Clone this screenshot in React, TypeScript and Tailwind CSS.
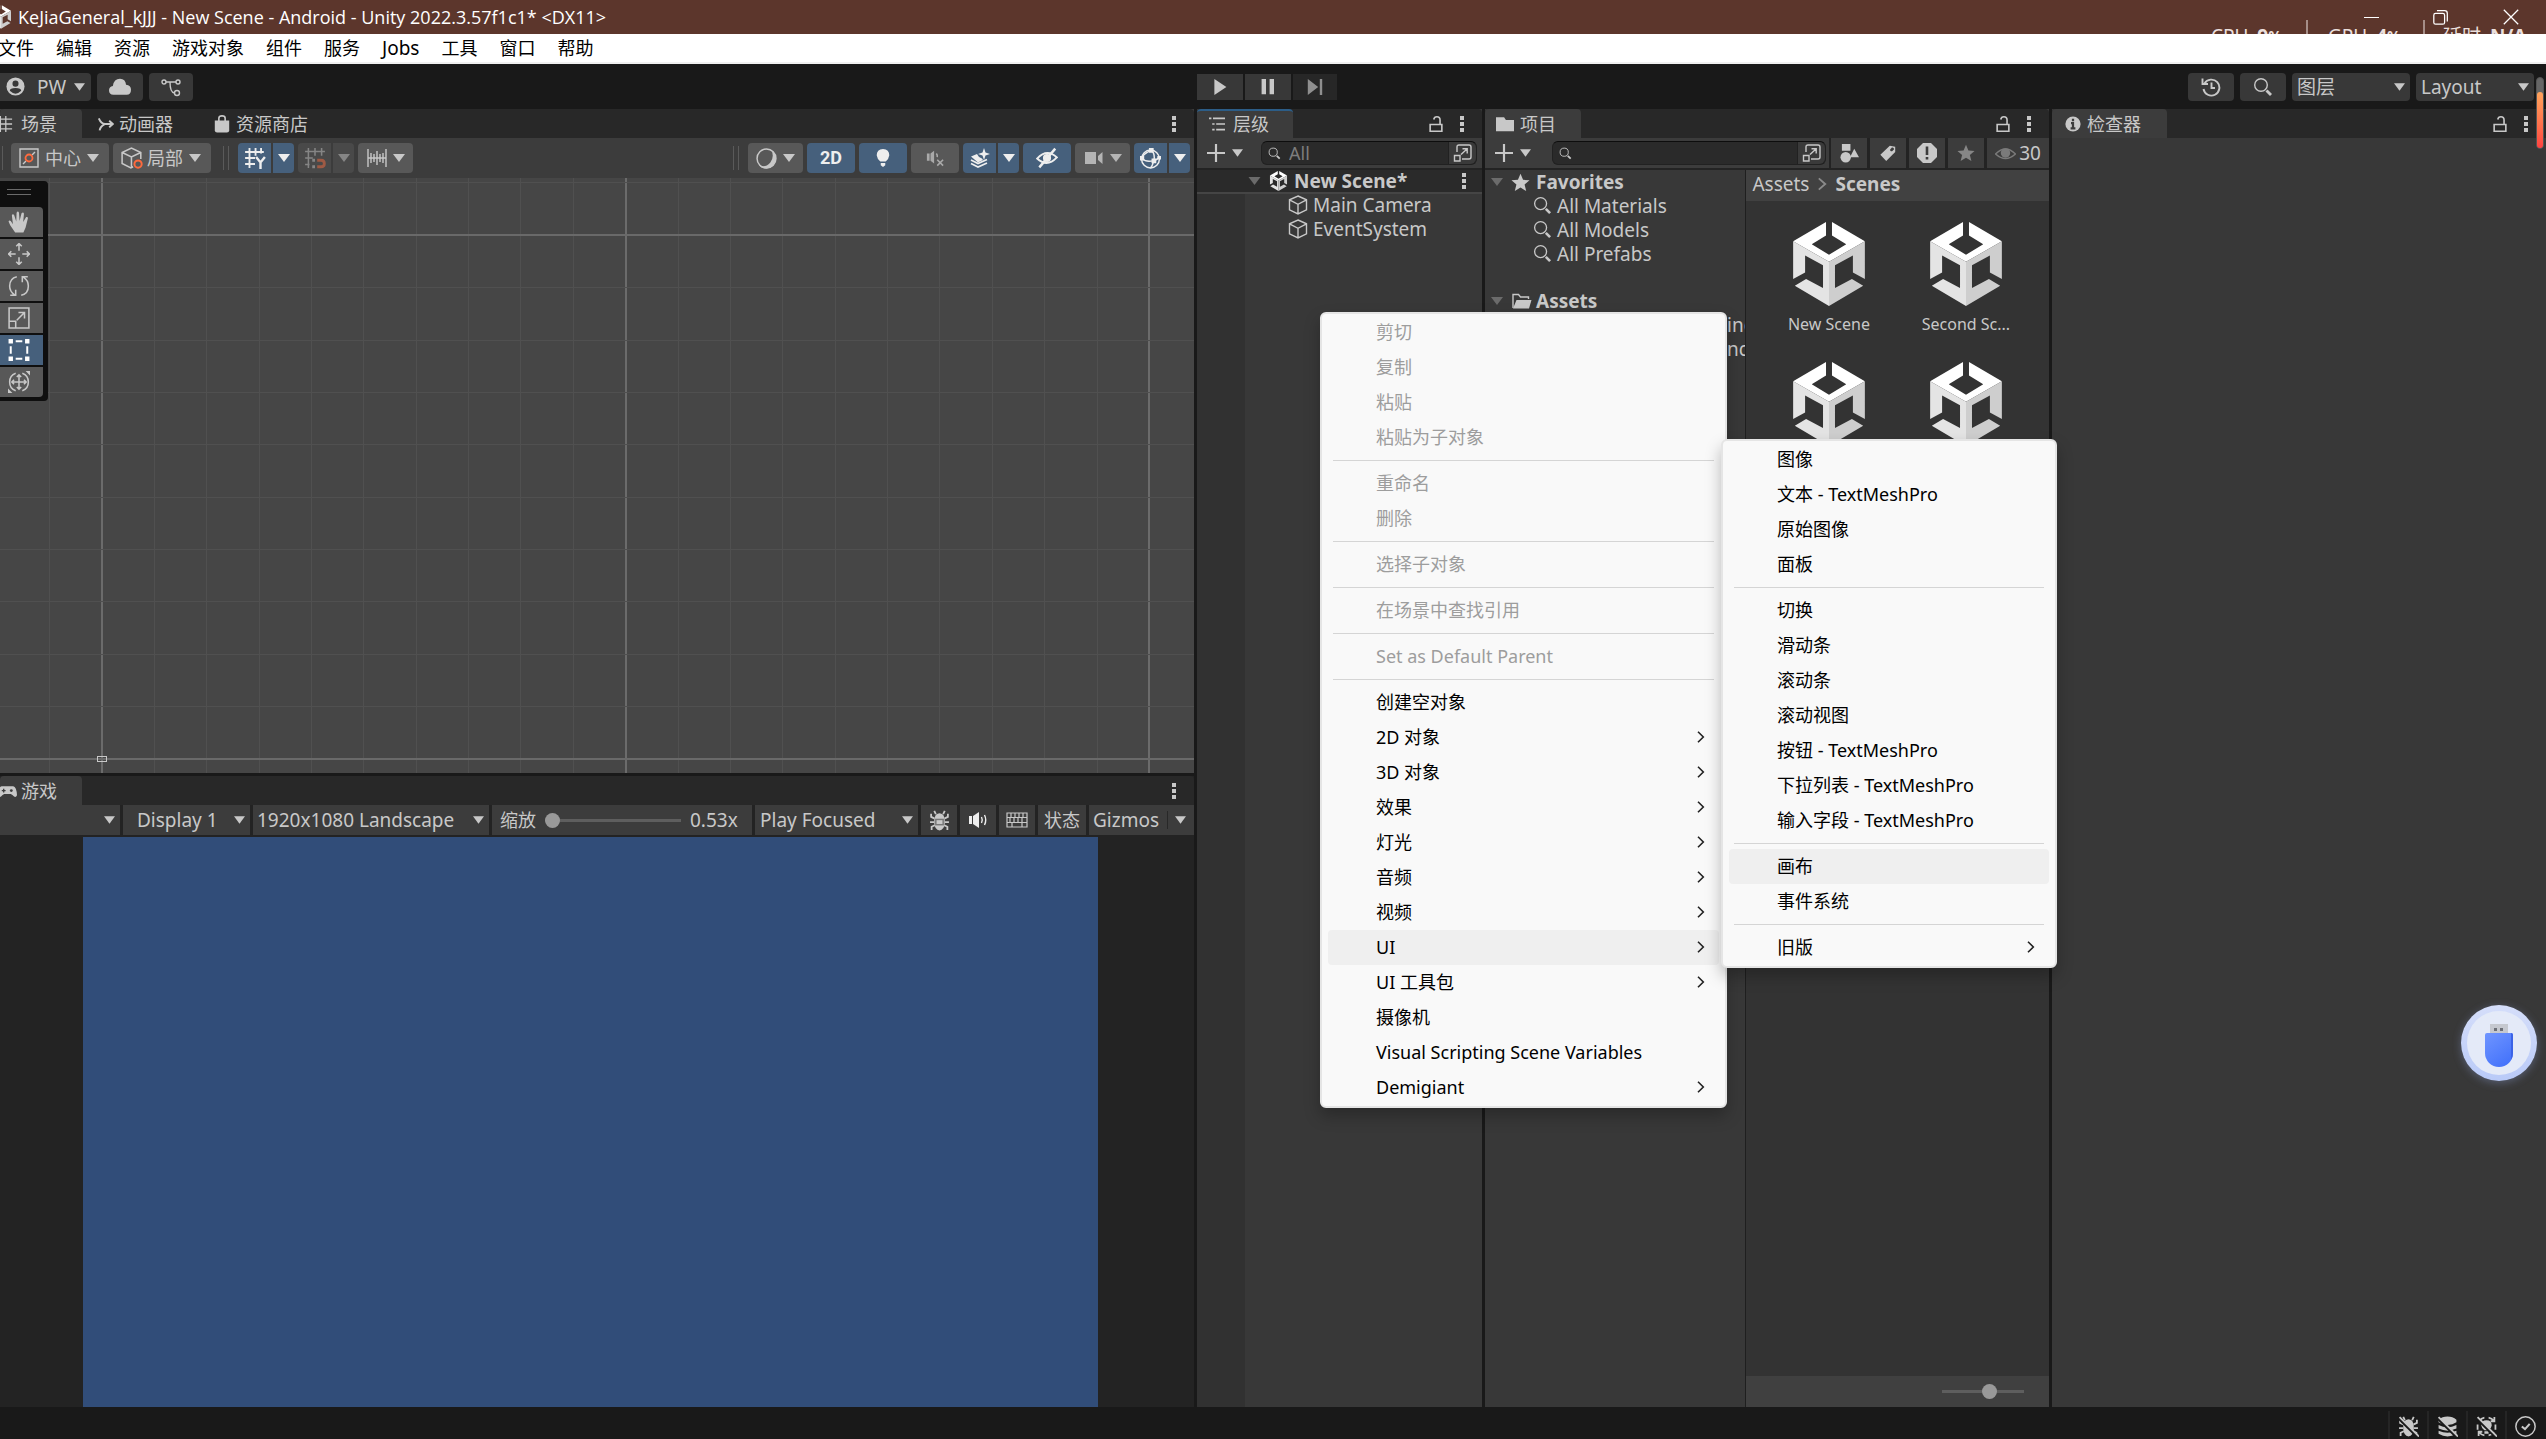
import { useState } from 'react'
import type { ReactNode } from 'react'
import clsx from 'clsx'

type MenuEntry = { label: string; disabled?: boolean; sub?: boolean; active?: boolean } | '-'

const menuBar = ['文件', '编辑', '资源', '游戏对象', '组件', '服务', 'Jobs', '工具', '窗口', '帮助']

const contextMenu: MenuEntry[] = [
  { label: '剪切', disabled: true },
  { label: '复制', disabled: true },
  { label: '粘贴', disabled: true },
  { label: '粘贴为子对象', disabled: true },
  '-',
  { label: '重命名', disabled: true },
  { label: '删除', disabled: true },
  '-',
  { label: '选择子对象', disabled: true },
  '-',
  { label: '在场景中查找引用', disabled: true },
  '-',
  { label: 'Set as Default Parent', disabled: true },
  '-',
  { label: '创建空对象' },
  { label: '2D 对象', sub: true },
  { label: '3D 对象', sub: true },
  { label: '效果', sub: true },
  { label: '灯光', sub: true },
  { label: '音频', sub: true },
  { label: '视频', sub: true },
  { label: 'UI', sub: true, active: true },
  { label: 'UI 工具包', sub: true },
  { label: '摄像机' },
  { label: 'Visual Scripting Scene Variables' },
  { label: 'Demigiant', sub: true },
]

const uiMenu: MenuEntry[] = [
  { label: '图像' },
  { label: '文本 - TextMeshPro' },
  { label: '原始图像' },
  { label: '面板' },
  '-',
  { label: '切换' },
  { label: '滑动条' },
  { label: '滚动条' },
  { label: '滚动视图' },
  { label: '按钮 - TextMeshPro' },
  { label: '下拉列表 - TextMeshPro' },
  { label: '输入字段 - TextMeshPro' },
  '-',
  { label: '画布', active: true },
  { label: '事件系统' },
  '-',
  { label: '旧版', sub: true },
]

/* ---------- Icons ---------- */

function Icon({ className = 'size-5', children }: { className?: string; children: ReactNode }) {
  return (
    <svg
      viewBox="0 0 20 20"
      className={clsx('shrink-0', className)}
      fill="none"
      stroke="currentColor"
      strokeWidth="1.4"
      aria-hidden="true"
    >
      {children}
    </svg>
  )
}

function Caret({ className = 'w-3' }: { className?: string }) {
  return (
    <svg viewBox="0 0 12 8" className={clsx('h-2 shrink-0 fill-current', className)} aria-hidden="true">
      <path d="M0 0H12L6 8Z" />
    </svg>
  )
}

function UnityCube({ className }: { className: string }) {
  return (
    <svg viewBox="0 0 216 253" className={clsx('shrink-0', className)} aria-hidden="true">
      <path fill="#fff" d="M99 0V41L56 67L108 99L160 67L117 41V0L216 58L108 120L0 58Z" />
      <path fill="#e4e4e4" d="M0 58L108 120V253L5 192L39 172L90 199V130L36 101V152L0 172Z" />
      <path fill="#cecece" d="M216 58L108 120V253L211 192L177 172L126 199V130L180 101V152L216 172Z" />
    </svg>
  )
}

const Cube = () => (
  <Icon>
    <path d="M10 1L18.5 4.8V14.8L10 19L1.5 14.8V4.8ZM1.5 4.8L10 9.3L18.5 4.8M10 9.3V19" />
  </Icon>
)

const Magnifier = ({ className }: { className?: string }) => (
  <Icon className={className}>
    <circle cx="8" cy="8" r="6.3" />
    <path d="M13.5 13.5L18 18" strokeWidth="2.8" />
  </Icon>
)

const ExportIcon = () => (
  <Icon className="size-5">
    <path d="M4 9V4Q4 2 6 2H16Q18 2 18 4V14Q18 16 16 16H9M1.5 12.5H7V18H1.5ZM8 11.5L14 6M9.5 5.8H14.2V10.5" />
  </Icon>
)

const Lock = () => (
  <Icon className="h-[18px] w-[18px]">
    <path d="M3.5 10.5H16.5V18H3.5ZM14.5 10V5.5Q14.5 2 11 2Q8 2 7.5 5" strokeWidth="1.8" />
  </Icon>
)

const Kebab = () => (
  <svg viewBox="0 0 4 16" className="h-4 w-1 shrink-0 fill-current" aria-hidden="true">
    <path d="M0 0H4V4H0ZM0 6H4V10H0ZM0 12H4V16H0Z" />
  </svg>
)

const Star = ({ className }: { className?: string }) => (
  <Icon className={className}>
    <path stroke="none" fill="currentColor" d="M10 .8L12.7 7.2L19.5 7.7L14.3 12.2L16 19L10 15.3L4 19L5.7 12.2L.5 7.7L7.3 7.2Z" />
  </Icon>
)

const Info = () => (
  <Icon className="size-4">
    <circle cx="10" cy="10" r="9.5" fill="currentColor" stroke="none" />
    <path d="M10 3.5V6.5M7.5 9H10V15M7 15.5H13" stroke="#3c3c3c" strokeWidth="2.8" />
  </Icon>
)

const BugBody = () => (
  <>
    <path stroke="none" fill="currentColor" d="M6.5 4.5Q10 1.5 13.5 4.5L15 8V13Q14.5 18.5 10 19.5Q5.5 18.5 5 13V8Z" />
    <path d="M6.5 4L5 .8M13.5 4L15 .8M5 8L2 6.5V3.5M15 8L18 6.5V3.5M5 11.5H1M15 11.5H19M5.5 14.5L2.5 16V19M14.5 14.5L17.5 16V19" strokeWidth="1.7" />
  </>
)

/* ---------- Shared controls ---------- */

function PanelTab({ icon, label, active, focused, className }: { icon: ReactNode; label: string; active?: boolean; focused?: boolean; className?: string }) {
  return (
    <button
      className={clsx(
        'flex h-full items-center rounded-t border-t-2 pb-px text-[18px] leading-6',
        active ? 'bg-[#3c3c3c]' : 'bg-transparent',
        focused ? 'border-[#2c5d87]' : 'border-transparent',
        className,
      )}
    >
      {icon}
      {label}
    </button>
  )
}

function TabStrip({ children, lock }: { children: ReactNode; lock?: boolean }) {
  return (
    <div className="flex h-[29px] shrink-0 items-center rounded-t bg-[#282828] pr-[18px]">
      {children}
      <div className="ml-auto flex items-center gap-[15px]">
        {lock && (
          <button aria-label="Lock">
            <Lock />
          </button>
        )}
        <button aria-label="Panel options">
          <Kebab />
        </button>
      </div>
    </div>
  )
}

function ToolButton({ label, className, tone = 'gray', children }: { label: string; className?: string; tone?: 'gray' | 'blue' | 'dim'; children: ReactNode }) {
  return (
    <button
      aria-label={label}
      className={clsx(
        'flex h-[30px] items-center justify-center gap-1.5',
        tone === 'gray' && 'bg-[#585858]',
        tone === 'blue' && 'bg-[#46607c] text-[#eee]',
        tone === 'dim' && 'bg-[#494949] text-[#858585]',
        className,
      )}
    >
      {children}
    </button>
  )
}

function Dropdown({ label, value, className, selectClass }: { label: string; value: string; className?: string; selectClass?: string }) {
  return (
    <div className={clsx('relative flex items-center', className)}>
      <select aria-label={label} className={clsx('h-full w-full appearance-none bg-transparent text-[19px] leading-6 outline-none', selectClass)}>
        <option>{value}</option>
      </select>
      <Caret className="pointer-events-none absolute right-[5px] w-[11px]" />
    </div>
  )
}

const Grip = ({ className }: { className?: string }) => (
  <div className={clsx('h-[24px] w-[6px] border-x border-[#5a5a5a]', className)} />
)

const sliderClass =
  'h-[15px] appearance-none bg-transparent [&::-webkit-slider-runnable-track]:h-[3px] [&::-webkit-slider-runnable-track]:bg-[#5e5e5e] [&::-webkit-slider-thumb]:-mt-[6px] [&::-webkit-slider-thumb]:size-[15px] [&::-webkit-slider-thumb]:appearance-none [&::-webkit-slider-thumb]:rounded-full [&::-webkit-slider-thumb]:bg-[#999]'

/* ---------- Window chrome ---------- */

function TitleBar() {
  return (
    <header className="relative flex h-[34px] shrink-0 items-center overflow-hidden bg-[#5c362c] text-white">
      <UnityCube className="mr-[7px] -ml-[9px] h-6 w-5" />
      <h1 className="font-['Open_Sans','Noto_Sans',sans-serif] text-[18px] leading-6">
        KeJiaGeneral_kJJJ - New Scene - Android - Unity 2022.3.57f1c1* &lt;DX11&gt;
      </h1>
      <div className="ml-auto flex">
        <button aria-label="Minimize" className="flex h-8 w-[70px] items-center justify-center">
          <span className="h-px w-[15px] bg-white" />
        </button>
        <button aria-label="Restore" className="flex h-8 w-[70px] items-center justify-center">
          <Icon className="size-[18px]">
            <path d="M2 8Q2 6 4 6H12Q14 6 14 8V16Q14 18 12 18H4Q2 18 2 16ZM5.5 3H14Q17 3 17 6V15" />
          </Icon>
        </button>
        <button aria-label="Close" className="flex h-8 w-[70px] items-center justify-center">
          <Icon className="size-[18px]">
            <path d="M2 2L18 18M18 2L2 18" />
          </Icon>
        </button>
      </div>
      {/* performance overlay, mostly hidden below the title bar */}
      <div className="absolute top-[20px] right-0 flex text-[19px] leading-8 text-[#eadfdc]">
        <p className="w-[97px] border-r-2 border-[#a58e88]">
          CPU <b className="ml-1">9<small>%</small></b>
        </p>
        <p className="w-[117px] border-r-2 border-[#a58e88] pl-5">
          GPU <b className="ml-1">4<small>%</small></b>
        </p>
        <p className="w-[121px] pl-[18px]">
          延时 <b className="ml-1">N/A</b>
        </p>
      </div>
    </header>
  )
}

function MainToolbar() {
  return (
    <div className="grid h-[45px] shrink-0 grid-cols-[1fr_auto_1fr] items-center bg-[#191919] pr-3 text-[19px] leading-6">
      <div className="flex items-center gap-1.5">
        <button className="flex h-7 w-[91px] items-center rounded-r-sm bg-[#383838] pl-1.5">
          <Icon className="mr-3 size-[19px]">
            <circle cx="10" cy="10" r="9.5" fill="currentColor" stroke="none" />
            <circle cx="10" cy="7" r="3.2" fill="#383838" stroke="none" />
            <path d="M4 14.5Q4 11.5 10 11.5T16 14.5Q13 17.5 10 17.5T4 14.5Z" fill="#383838" stroke="none" />
          </Icon>
          PW
          <Caret className="ml-auto mr-1.5 w-[11px]" />
        </button>
        <button aria-label="Cloud" className="flex h-7 w-[46px] items-center justify-center rounded-sm bg-[#383838]">
          <Icon className="size-[22px]">
            <path stroke="none" fill="currentColor" d="M4 17Q0 17 0 13Q0 9.500 3.500 9Q4.500 2.500 10 2.500Q15 2.500 15.500 8Q20 8.500 20 12.500Q20 17 16 17Z" />
          </Icon>
        </button>
        <button aria-label="Version control" className="flex h-7 w-11 items-center justify-center rounded-sm bg-[#383838]">
          <Icon>
            <circle cx="3" cy="5" r="2" />
            <circle cx="17" cy="5" r="2" />
            <circle cx="16" cy="16" r="2.500" />
            <path d="M5 5H15M9 5Q9 15.500 13.500 16" />
          </Icon>
        </button>
      </div>
      <div className="flex gap-0.5">
        <button aria-label="Play" className="flex h-[26px] w-[46px] items-center justify-center bg-[#383838]">
          <Icon className="size-4">
            <path stroke="none" fill="currentColor" d="M3 0L18 10L3 20Z" />
          </Icon>
        </button>
        <button aria-label="Pause" className="flex h-[26px] w-[46px] items-center justify-center bg-[#383838]">
          <Icon className="size-4">
            <path stroke="none" fill="currentColor" d="M2 0H7.500V19H2ZM12 0H17.500V19H12Z" />
          </Icon>
        </button>
        <button aria-label="Step" className="flex h-[26px] w-[44px] items-center justify-center bg-[#272727] text-[#8f8f8f]">
          <Icon className="size-4">
            <path stroke="none" fill="currentColor" d="M1 0L14 10L1 20ZM16 0H19V20H16Z" />
          </Icon>
        </button>
      </div>
      <div className="flex items-center justify-end gap-1.5">
        <button aria-label="History" className="flex h-7 w-[46px] items-center justify-center rounded-sm bg-[#383838]">
          <Icon>
            <path d="M3.500 6.500A8 8 0 1 1 2.500 12M1.500 1.500V7H7M10.500 5.500V11H14" strokeWidth="1.900" />
          </Icon>
        </button>
        <button aria-label="Search" className="flex h-7 w-[46px] items-center justify-center rounded-sm bg-[#383838]">
          <Magnifier />
        </button>
        <Dropdown label="Layers" value="图层" className="h-7 w-[118px] rounded-sm bg-[#383838]" selectClass="pl-[5px] text-[18px]" />
        <Dropdown label="Layout" value="Layout" className="h-7 w-[118px] rounded-sm bg-[#383838]" selectClass="pl-[5px]" />
      </div>
    </div>
  )
}

/* ---------- Scene ---------- */

const CELL = 52.37

function SceneGrid() {
  const cols = Array.from({ length: 60 }, (_, i) => i - 1)
  const rows = Array.from({ length: 36 }, (_, i) => i - 1)
  return (
    <svg className="h-full w-full" aria-label="Scene view" shapeRendering="crispEdges">
      {cols.map((i) => (
        <line key={i} x1={102 + i * CELL} x2={102 + i * CELL} y1="0" y2="100%" stroke={i % 10 ? '#505050' : '#6b6b6b'} strokeWidth={i % 10 ? 1 : 2} />
      ))}
      {rows.map((i) => (
        <line key={i} y1={581 - i * CELL} y2={581 - i * CELL} x1="0" x2="100%" stroke={i % 10 ? '#505050' : '#696969'} strokeWidth={i % 10 ? 1 : 2} />
      ))}
      <rect x="97" y="578" width="9" height="5" fill="none" stroke="#c8c8c8" />
    </svg>
  )
}

function ScenePalette() {
  const [tool, setTool] = useState('rect')
  const tools: { id: string; icon: ReactNode }[] = [
    {
      id: 'hand',
      icon: (
        <path stroke="none" fill="currentColor" d="M6.500 19.500L2 13L.5 9.500Q1 8 2.500 9L4.500 12L3.500 4Q4 2 5.500 3.500L7.500 9.500L7.800 1.500Q9 -.5 10 1.500L10.500 9L12.300 2Q14 .5 14.500 2.500L13.800 10L16.500 5.500Q18.500 5 18 7L16 15L14 19.500Z" />
      ),
    },
    { id: 'move', icon: <path d="M10 7V0M7.500 3L10 .5L12.500 3M10 13V20M7.500 17L10 19.500L12.500 17M7 10H0M3 7.500L.5 10L3 12.500M13 10H20M17 7.500L19.500 10L17 12.500" /> },
    { id: 'rotate', icon: <path d="M8 1.500Q1.500 3 1.500 10Q1.500 15 6 18M2 18.500H7V13.500M12 18.500Q18.500 17 18.500 10Q18.500 5 14 2M18 1.500H13V6.500" /> },
    { id: 'scale', icon: <path d="M1 1H19V19H1ZM1 13H7V19M8 12L14.500 5.500M9.500 5H15V10.500" /> },
    {
      id: 'rect',
      icon: (
        <>
          <path d="M7 2H13M7 18H13M2.500 6.500V13.500M17.500 6.500V13.500" strokeWidth="1.800" />
          <path stroke="none" fill="currentColor" d="M.5 0H4.500V4H.5ZM15.500 0H19.500V4H15.500ZM.5 16H4.500V20H.5ZM15.500 16H19.500V20H15.500Z" />
        </>
      ),
    },
    {
      id: 'transform',
      icon: (
        <>
          <path d="M7 2Q1.500 4 1.500 10Q1.500 16 7 18M13 2Q18.500 4 18.500 10Q18.500 16 13 18" />
          <path d="M10 3.500V16.500M3.500 10H16.500M8 5.500L10 3.500L12 5.500M8 14.500L10 16.500L12 14.500M5.500 8L3.500 10L5.500 12M14.500 8L16.500 10L14.500 12" />
          <path stroke="none" fill="currentColor" d="M16 0H20V4ZM0 16V20H4Z" />
        </>
      ),
    },
  ]
  return (
    <div className="absolute top-[3px] left-0 flex w-12 flex-col gap-0.5 rounded-r bg-[#0f0f0f] pb-1">
      <div className="mt-2 mb-[10px] ml-[7px] h-1.5 w-6 border-y border-[#6a6a6a]" />
      {tools.map((t) => (
        <button
          key={t.id}
          aria-label={t.id}
          onClick={() => setTool(t.id)}
          className={clsx('flex h-[30px] w-[43px] items-center pl-2 first-of-type:rounded-tr last:rounded-br', tool === t.id ? 'bg-[#46607c] text-white' : 'bg-[#585858]')}
        >
          <Icon className="h-[22px] w-[22px]">{t.icon}</Icon>
        </button>
      ))}
    </div>
  )
}

function ScenePanel() {
  return (
    <section className="flex min-h-0 flex-col bg-[#3c3c3c]">
      <TabStrip>
        <PanelTab
          active
          className="w-[82px]"
          label="场景"
          icon={
            <Icon className="-ml-[5px] mr-2 size-[18px]">
              <path d="M6 1V19M12 1V19M0 4.500H19M0 10H19M0 15.500H19" />
            </Icon>
          }
        />
        <PanelTab
          className="pl-4"
          label="动画器"
          icon={
            <Icon className="mr-[5px] size-4">
              <path d="M1 3Q4 10 9 10H18M2 18Q3 13 8 10.500M14 6L18.500 10L14 14" strokeWidth="2.400" />
            </Icon>
          }
        />
        <PanelTab
          className="pl-10"
          label="资源商店"
          icon={
            <Icon className="mr-[5px] size-[18px]">
              <path stroke="none" fill="currentColor" d="M2 6H18V17Q18 19.500 15.500 19.500H4.500Q2 19.500 2 17Z" />
              <path d="M6.500 9V3.500Q6.500 1 10 1T13.500 3.500V9" strokeWidth="1.800" />
            </Icon>
          }
        />
      </TabStrip>
      <div className="flex h-10 shrink-0 items-center justify-between pr-1 text-[18px] leading-6">
        <div className="flex items-center gap-1">
          <Grip className="mr-1 -ml-[3px]" />
          <ToolButton label="中心" className="w-[98px] rounded pr-0.5">
            <Icon className="size-5">
              <path d="M1 1H19V19H1ZM4 16L7 13M13 7L16 4" />
              <circle cx="10" cy="10" r="3.500" stroke="#ff6a3d" strokeWidth="1.800" />
            </Icon>
            <span>中心</span>
            <Caret />
          </ToolButton>
          <ToolButton label="局部" className="w-[98px] rounded pr-0.5">
            <Icon className="size-[22px]">
              <path d="M11 18L9 19L1 15V5L9.500 1L18 5V11M1 5L9.500 9L18 5M9.500 9V18" />
              <circle cx="15.500" cy="15.500" r="3.300" stroke="#ff6a3d" strokeWidth="1.800" />
            </Icon>
            <span className="-ml-0.5">局部</span>
            <Caret />
          </ToolButton>
          <Grip className="mr-[5px] ml-2" />
          <div className="flex gap-0.5">
            <ToolButton label="Grid" tone="blue" className="w-[33px] rounded-l">
              <Icon className="size-[22px]">
                <path d="M5 1V19M10.500 1V8M15.500 1V6M1 4.500H18M1 10H10M1 15.500H10" strokeWidth="1.700" />
                <path d="M11 9L15 14L19 9M15 14V20" strokeWidth="2.200" />
              </Icon>
            </ToolButton>
            <ToolButton label="Grid options" tone="blue" className="w-[21px] rounded-r text-[#c4c4c4]">
              <Caret />
            </ToolButton>
          </div>
          <div className="flex gap-0.5">
            <ToolButton label="Snap" tone="dim" className="w-[33px] rounded-l">
              <Icon className="size-[22px]">
                <path d="M4 1V19M10 1V8M16 1V8M1 4H19M1 10H8M1 16H5" />
                <path d="M12 12H15.500Q18.500 12 18.500 15T15.500 18H12" stroke="#9f5a44" strokeWidth="2.600" />
                <path d="M7.500 12H10M7.500 18H10" strokeWidth="2.600" />
              </Icon>
            </ToolButton>
            <ToolButton label="Snap options" tone="dim" className="w-[21px] rounded-r">
              <Caret />
            </ToolButton>
          </div>
          <ToolButton label="Increment" className="w-[55px] rounded">
            <Icon className="size-5">
              <path d="M1 1V19M19 1V19M1 10H19M4 5V15M7 6V14M10 3V17M13 6V14M16 5V15" />
            </Icon>
            <Caret />
          </ToolButton>
        </div>
        <div className="flex items-center gap-1">
          <Grip className="mr-[5px]" />
          <ToolButton label="Draw mode" className="w-[55px] rounded">
            <Icon className="size-[21px]">
              <circle cx="10" cy="10" r="9" />
              <path stroke="none" fill="currentColor" d="M15 2.500Q19.500 5.500 19 11Q17.500 19 10 19.500Q5 19.500 3 16.500Q9 19 13.500 14Q17.500 9 15 2.500Z" />
            </Icon>
            <Caret />
          </ToolButton>
          <ToolButton label="2D" tone="blue" className="w-12 rounded font-['Roboto',sans-serif] font-bold">
            2D
          </ToolButton>
          <ToolButton label="Lighting" tone="blue" className="w-12 rounded">
            <Icon className="size-[18px]">
              <path stroke="none" fill="currentColor" d="M10 0Q17 .5 17 7Q16.500 11 13 14H7Q3.500 11 3 7Q3 .5 10 0ZM7.500 15.500H12.500V18L10 20L7.500 18Z" />
            </Icon>
          </ToolButton>
          <ToolButton label="Audio" className="w-12 rounded text-[#a9a9a9]">
            <Icon className="size-[18px]">
              <path stroke="none" fill="currentColor" d="M1 5H4V13H1ZM5 5L9 2V16L5 13Z" />
              <path d="M11.500 5Q13 7 12.500 9M12.500 12L19 18.500M19 12L12.500 18.500" strokeWidth="1.800" />
            </Icon>
          </ToolButton>
          <div className="flex gap-0.5">
            <ToolButton label="Effects" tone="blue" className="w-[33px] rounded-l">
              <Icon className="size-5">
                <path stroke="none" fill="currentColor" d="M14 0L15.500 4.500L20 6L15.500 7.500L14 12L12.500 7.500L8 6L12.500 4.500ZM1 8.500L7 6L9 9L12 10.500L13 12L8 14.500Z" />
                <path d="M1 12L8 15.500L17 11.500M1 15.500L8 19L17 15" strokeWidth="1.800" />
              </Icon>
            </ToolButton>
            <ToolButton label="Effects options" tone="blue" className="w-[21px] rounded-r text-[#c4c4c4]">
              <Caret />
            </ToolButton>
          </div>
          <ToolButton label="Hidden objects" tone="blue" className="w-12 rounded">
            <Icon className="size-[22px]">
              <path d="M1 10.500Q10 1 19 9.500Q10 19 1 10.500Z" strokeWidth="1.700" />
              <circle cx="10" cy="10" r="3" fill="currentColor" />
              <path d="M3 18.500L17.500 1.500" strokeWidth="2.200" />
            </Icon>
          </ToolButton>
          <ToolButton label="Scene camera" className="w-[55px] rounded text-[#b4b4b4]">
            <Icon className="size-5">
              <path stroke="none" fill="currentColor" d="M1 4H12V16H1ZM14 8L18.500 4V16L14 12Z" />
            </Icon>
            <Caret />
          </ToolButton>
          <div className="flex gap-0.5">
            <ToolButton label="Gizmos" tone="blue" className="w-[33px] rounded-l">
              <Icon className="size-[21px]">
                <circle cx="10" cy="10.500" r="8.500" />
                <path d="M11 2Q2 6 2 10Q6 14 13 12Q17 11 18 9M11 2Q15 7 13 12Q12 17 10 19" />
                <path stroke="none" fill="currentColor" d="M8.500 0H13V4.500H8.500ZM0 7.500H4V12H0ZM11 10H15.500V14.500H11ZM16.500 7.500H20V11H16.500Z" />
              </Icon>
            </ToolButton>
            <ToolButton label="Gizmos options" tone="blue" className="w-[21px] rounded-r text-[#c4c4c4]">
              <Caret />
            </ToolButton>
          </div>
        </div>
      </div>
      <div className="relative min-h-0 flex-1 overflow-hidden bg-[#464646]">
        <SceneGrid />
        <ScenePalette />
      </div>
    </section>
  )
}

/* ---------- Game ---------- */

function GamePanel() {
  return (
    <section className="flex min-h-0 flex-col bg-[#232323]">
      <TabStrip>
        <PanelTab
          active
          className="w-[82px]"
          label="游戏"
          icon={
            <Icon className="-ml-0.5 mr-1 size-[19px]">
              <path stroke="none" fill="currentColor" d="M4 4.500H16Q19.500 5 20 14Q18.500 17.500 15.500 14L13.500 12.500H6.500L4.500 14Q1.500 17.500 0 14Q.5 5 4 4.500Z" />
              <path d="M4 9H8M6 7V11" stroke="#3c3c3c" />
              <circle cx="14" cy="9" r="1.500" fill="#3c3c3c" stroke="none" />
            </Icon>
          }
        />
      </TabStrip>
      <div className="mb-0.5 flex h-[30px] shrink-0 gap-[3px] text-[19px] leading-6">
        <Dropdown label="View" value="" className="w-[120px] bg-[#3c3c3c]" />
        <Dropdown label="Display" value="Display 1" className="w-[127px] bg-[#3c3c3c]" selectClass="pl-[14px]" />
        <Dropdown label="Resolution" value="1920x1080 Landscape" className="w-[236px] bg-[#3c3c3c]" selectClass="pl-1" />
        <label className="flex flex-1 items-center bg-[#3c3c3c] pl-2 text-[18px]">
          缩放
          <input type="range" min="0" max="100" defaultValue="0" className={clsx('mx-[9px] min-w-0 flex-1', sliderClass)} />
          <span className="w-[62px] text-[19px]">0.53x</span>
        </label>
        <Dropdown label="Play mode" value="Play Focused" className="w-[163px] bg-[#3c3c3c]" selectClass="pl-[5px]" />
        <button aria-label="Frame debugger" className="flex w-9 items-center justify-center bg-[#3c3c3c]">
          <Icon className="size-[21px]">
            <BugBody />
            <rect x="6.500" y="9" width="7" height="5" stroke="#777" />
          </Icon>
        </button>
        <button aria-label="Mute" className="flex w-9 items-center justify-center bg-[#3c3c3c] text-[#eee]">
          <Icon>
            <path stroke="none" fill="currentColor" d="M1 6H4V14H1ZM5 6L11 2V18L5 14Z" />
            <path d="M13.500 7Q15 10 13.500 13M16.500 5Q19 10 16.500 15" />
          </Icon>
        </button>
        <button aria-label="Shortcuts" className="flex w-9 items-center justify-center bg-[#3c3c3c]">
          <svg viewBox="0 0 22 16" className="h-4 w-[22px] fill-none stroke-current" aria-hidden="true">
            <path d="M1 1H21V15H1ZM1 5.500H21M1 10.500H21M5 1V5.500M9 1V5.500M13 1V5.500M17 1V5.500M4 5.500V10.500M8 5.500V10.500M12 5.500V10.500M16 5.500V10.500M6 10.500V15M16 10.500V15" strokeWidth="1.200" />
          </svg>
        </button>
        <button className="w-12 bg-[#3c3c3c] text-[18px]">状态</button>
        <div className="flex w-[105px] items-center bg-[#3c3c3c] pl-1">
          <button>Gizmos</button>
          <button aria-label="Gizmos options" className="ml-auto flex h-[18px] items-center border-l border-[#282828] pr-2 pl-[7px]">
            <Caret className="w-[11px]" />
          </button>
        </div>
      </div>
      <div className="min-h-0 flex-1 pr-24 pl-[83px]">
        <div className="h-full bg-[#314d79]" />
      </div>
    </section>
  )
}

/* ---------- Hierarchy ---------- */

function CreateButton() {
  return (
    <button aria-label="Create" className="flex items-center gap-[7px] pl-[10px]">
      <Icon className="size-[18px]">
        <path d="M10 0V20M0 10H20" strokeWidth="2.400" />
      </Icon>
      <Caret className="w-[11px]" />
    </button>
  )
}

function SearchField({ label, placeholder }: { label: string; placeholder?: string }) {
  return (
    <div className="flex h-6 min-w-0 flex-1 items-center rounded-md border border-[#212121] border-t-[#0d0d0d] bg-[#2a2a2a] pl-1.5">
      <Magnifier className="size-[13px]" />
      <input aria-label={label} placeholder={placeholder} className="ml-2 min-w-0 flex-1 bg-transparent text-[18px] leading-5 outline-none placeholder:text-[#7d7d7d]" />
      <button aria-label="Open search" className="flex h-full w-7 items-center justify-center rounded-r-md border-l border-[#212121] bg-[#3a3a3a]">
        <ExportIcon />
      </button>
    </div>
  )
}

function HierarchyPanel() {
  return (
    <section className="flex min-h-0 flex-col bg-[#383838]">
      <TabStrip lock>
        <PanelTab
          active
          focused
          className="w-24 pl-3"
          label="层级"
          icon={
            <Icon className="mr-2 size-4">
              <path d="M0 3H3M5 3H20M4 10H7M9 10H20M4 17H7M9 17H20" strokeWidth="2" />
            </Icon>
          }
        />
      </TabStrip>
      <div className="flex h-8 shrink-0 items-center gap-[18px] border-b-2 border-[#232323] bg-[#3c3c3c] pr-[5px]">
        <CreateButton />
        <SearchField label="Search hierarchy" placeholder="All" />
      </div>
      <div className="flex h-6 shrink-0 items-center border-b-2 border-[#454545] bg-[#2a2a2a] pr-4 pl-[51px] text-[19px] leading-6 font-bold">
        <Caret className="mr-2 w-[13px] text-[#6b6b6b]" />
        <UnityCube className="mr-1.5 h-5 w-[19px]" />
        New Scene*
        <button aria-label="Scene options" className="ml-auto">
          <Kebab />
        </button>
      </div>
      <div className="flex flex-1">
        <div className="w-12 bg-[#313131]" />
        <ul className="text-[19px] leading-[22px]">
          {['Main Camera', 'EventSystem'].map((name) => (
            <li key={name} className="flex h-6 items-center gap-[5px] pb-0.5 pl-[43px]">
              <Cube />
              {name}
            </li>
          ))}
        </ul>
      </div>
    </section>
  )
}

/* ---------- Project ---------- */

const FolderOpen = () => (
  <Icon className="h-5 w-[21px]">
    <path d="M1.500 17V3.500H7L9 6H17V8" />
    <path stroke="none" fill="currentColor" d="M5 9H20L17.500 17.500H1.500Z" />
  </Icon>
)

function ProjectPanel() {
  return (
    <section className="flex min-h-0 flex-col bg-[#383838]">
      <TabStrip lock>
        <PanelTab
          active
          className="w-24 pl-[11px]"
          label="项目"
          icon={
            <Icon className="mr-1.5 size-[18px]">
              <path stroke="none" fill="currentColor" d="M0 2.500H9L11 5.500H20V18H0Z" />
            </Icon>
          }
        />
      </TabStrip>
      <div className="flex h-8 shrink-0 border-b-2 border-[#232323] bg-[#232323] text-[19px] leading-6">
        <div className="flex min-w-0 flex-1 items-center gap-[21px] bg-[#3c3c3c] pr-[3px]">
          <CreateButton />
          <SearchField label="Search project" />
        </div>
        <div className="flex gap-[3px] pl-0.5">
          <button aria-label="Filter by type" className="flex w-9 items-center justify-center bg-[#3c3c3c]">
            <Icon className="size-[19px]">
              <path stroke="none" fill="currentColor" d="M2 0H11V7H2ZM15 5L20 14H10.500Z" />
              <circle cx="6" cy="14" r="5.500" fill="currentColor" stroke="none" />
            </Icon>
          </button>
          <button aria-label="Filter by label" className="flex w-9 items-center justify-center bg-[#3c3c3c]">
            <Icon className="size-[18px]">
              <path stroke="none" fill="currentColor" fillRule="evenodd" d="M1.500 12L12 2L18 3V9L8 19ZM13.500 5A1.600 1.600 0 1 0 15.500 7A1.600 1.600 0 1 0 13.500 5Z" />
            </Icon>
          </button>
          <button aria-label="Filter by log" className="flex w-9 items-center justify-center bg-[#3c3c3c]">
            <Icon>
              <path stroke="none" fill="currentColor" d="M6 0H14L20 6V14L14 20H6L0 14V6Z" />
              <path d="M10 3.500V12M10 14V16.500" stroke="#3c3c3c" strokeWidth="2.600" />
            </Icon>
          </button>
          <button aria-label="Save search" className="flex w-9 items-center justify-center bg-[#3c3c3c] text-[#868686]">
            <Star className="size-[18px]" />
          </button>
          <button className="flex w-[62px] items-center justify-center gap-[3px] bg-[#3c3c3c]">
            <Icon className="size-[21px] text-[#7a7a7a]">
              <path d="M.5 10.500Q10 1 19.500 10.500Q10 19 .5 10.500Z" />
              <circle cx="10" cy="9.500" r="4.500" fill="currentColor" stroke="none" />
            </Icon>
            30
          </button>
        </div>
      </div>
      <div className="grid min-h-0 flex-1 grid-cols-[minmax(0,261fr)_minmax(0,302fr)]">
        <ul className="overflow-hidden border-r border-[#1f1f1f] text-[19px] leading-6">
          <li className="flex h-6 items-center pl-1.5 font-bold">
            <Caret className="mr-2 text-[#6b6b6b]" />
            <Star className="mr-1.5 size-[19px]" />
            Favorites
          </li>
          {['All Materials', 'All Models', 'All Prefabs'].map((name) => (
            <li key={name} className="flex h-6 items-center gap-[5px] pb-px pl-12">
              <Magnifier className="size-[19px]" />
              {name}
            </li>
          ))}
          <li className="mt-[23px] flex h-6 items-center pl-1.5 font-bold">
            <Caret className="mr-2 text-[#6b6b6b]" />
            <FolderOpen />
            <span className="ml-1">Assets</span>
          </li>
          <li className="pl-[242px]">ing</li>
          <li className="pl-[242px]">nc</li>
        </ul>
        <div className="flex min-h-0 flex-col bg-[#333]">
          <nav className="flex h-[31px] shrink-0 items-center bg-[#414141] pb-1 pl-1.5 text-[19px] leading-6">
            <a href="#assets">Assets</a>
            <Icon className="mx-[5px] size-4 text-[#8a8a8a]">
              <path d="M6 3L14 10L6 17" strokeWidth="2.400" />
            </Icon>
            <a href="#scenes" className="font-bold">
              Scenes
            </a>
          </nav>
          <ul className="grid grid-cols-[137px_137px] pt-[21px] pl-[14px] text-[16px] leading-5">
            {['New Scene', 'Second Sc...', '', ''].map((name, i) => (
              <li key={i} className="flex h-[140px] flex-col items-center gap-2">
                <UnityCube className="h-[84px] w-[72px]" />
                {name}
              </li>
            ))}
          </ul>
          <div className="mt-auto flex h-[31px] shrink-0 items-center justify-end bg-[#404040] pr-[25px]">
            <input type="range" aria-label="Icon size" min="0" max="100" defaultValue="60" className={clsx('w-[82px]', sliderClass)} />
          </div>
        </div>
      </div>
    </section>
  )
}

function InspectorPanel() {
  return (
    <section className="bg-[#383838]">
      <TabStrip lock>
        <PanelTab active className="w-[115px] gap-1.5 pl-[13px]" label="检查器" icon={<Info />} />
      </TabStrip>
    </section>
  )
}

/* ---------- Menus ---------- */

function PopupMenu({ items, className }: { items: MenuEntry[]; className: string }) {
  return (
    <ul
      role="menu"
      className={clsx('absolute rounded-md border-2 border-[#e5e5e5] bg-[#f9f9f9] py-px text-[18px] leading-6 text-black shadow-[0_8px_16px_rgba(0,0,0,0.26)]', className)}
    >
      {items.map((item, i) =>
        item === '-' ? (
          <li key={i} role="separator" className="mx-[11px] my-[5px] h-px bg-[#d5d5d5]" />
        ) : (
          <li key={i} role="none">
            <button
              role="menuitem"
              disabled={item.disabled}
              className={clsx(
                'mx-1.5 flex h-[35px] w-[calc(100%-12px)] items-center justify-between rounded pr-3.5 pb-0.5 pl-12 text-left disabled:text-[#9d9d9d]',
                item.active && 'bg-[#efefef]',
              )}
            >
              {item.label}
              {item.sub && (
                <svg viewBox="0 0 8 12" className="h-3 w-2 fill-none stroke-[#222]" strokeWidth="1.6" aria-hidden="true">
                  <path d="M1 .8L6.300 6L1 11.200" />
                </svg>
              )}
            </button>
          </li>
        ),
      )}
    </ul>
  )
}

function StatusBar() {
  return (
    <footer className="flex h-8 shrink-0 justify-end bg-[#191919] pt-1 pr-0.5">
      {[
        <>
          <BugBody />
          <path d="M0 1.500L18.500 20" stroke="#191919" strokeWidth="2.500" />
          <path d="M1.500 1L20 19.500" strokeWidth="1.800" />
        </>,
        <>
          <path stroke="none" fill="currentColor" d="M1.500 3.500Q5 .5 10 .5T18.500 3.500V6Q15 8.500 10 8.500T1.500 6ZM1.500 8.500Q10 13 18.500 8.500V12Q10 16 1.500 12ZM1.500 14Q10 18 18.500 14V17Q10 22 1.500 17Z" />
          <path d="M0 1.500L18.500 20" stroke="#191919" strokeWidth="2.500" />
          <path d="M1.500 1L20 19.500" strokeWidth="1.800" />
        </>,
        <>
          <path d="M3 5Q5 2 8 1.500M12 1.500Q15 2 17 4.500M18.500 8V13M3 15.500Q5 18 8 18.500M1.500 8V13M12 18.500Q15 18 17 15.500M17.500 1V5H14M2.500 19V15H6" strokeWidth="1.700" />
          <path stroke="none" fill="currentColor" d="M10 4Q15 4 15 9Q14.500 12 12 13.500H8Q5.500 12 5 9Q5 4 10 4ZM8 14.500H12V17H8Z" />
          <path d="M0 1.500L18.500 20" stroke="#191919" strokeWidth="2.500" />
          <path d="M1.500 1L20 19.500" strokeWidth="1.800" />
        </>,
        <>
          <circle cx="10" cy="10" r="9.200" />
          <path d="M6.500 10L9.500 12.500L14 7.500" strokeWidth="2" />
        </>,
      ].map((icon, i) => (
        <button key={i} aria-label={['Debugger', 'Cache server', 'Auto lighting', 'Background tasks'][i]} className="flex w-[39px] items-center justify-center border-l-2 border-[#252525] pt-0.5">
          <Icon className="size-[21px]">{icon}</Icon>
        </button>
      ))}
    </footer>
  )
}

function UsbWidget() {
  return (
    <button aria-label="USB device" className="absolute top-[1005px] right-[9px] size-[76px] rounded-full shadow-[0_2px_8px_rgba(150,170,230,0.35)]">
      <svg viewBox="0 0 76 76" className="size-full">
        <defs>
          <linearGradient id="usbBody" x1="0" y1="0" x2="0.6" y2="1">
            <stop offset="0" stopColor="#6f95ff" />
            <stop offset="1" stopColor="#4674fb" />
          </linearGradient>
          <linearGradient id="usbRing" x1="0" y1="0" x2="0" y2="1">
            <stop offset="0" stopColor="#d5defa" />
            <stop offset="1" stopColor="#b9caf8" />
          </linearGradient>
        </defs>
        <circle cx="38" cy="38" r="38" fill="url(#usbRing)" />
        <circle cx="38" cy="38" r="32" fill="#e4eaf8" />
        <rect x="29" y="19" width="18" height="11" fill="#c5c8cf" />
        <path d="M33 23H36V26H33ZM39 23H42V26H39Z" fill="#6d7078" />
        <path d="M24 30Q24 28 26 28H50Q52 28 52 30V48A14 14 0 0 1 24 48Z" fill="url(#usbBody)" />
        <path d="M50 28Q52 28 52 30V48Q52 52 50 55Z" fill="#3b63e6" />
      </svg>
    </button>
  )
}

export default function App() {
  return (
    <div className="relative flex h-screen flex-col overflow-hidden bg-[#191919] font-['Noto_Sans','Noto_Sans_CJK_SC',sans-serif] text-[#c8c8c8]">
      <TitleBar />
      <nav className="flex h-[30px] shrink-0 items-center gap-[22px] overflow-hidden border-b-2 border-[#f0f0f0] bg-white text-[18px] leading-6 text-black">
        {menuBar.map((name) => (
          <button key={name} className={clsx('first:-ml-0.5', name === 'Jobs' && 'text-[19px]')}>
            {name}
          </button>
        ))}
      </nav>
      <MainToolbar />
      <main className="grid min-h-0 flex-1 grid-cols-[minmax(0,1194fr)_minmax(0,285fr)_minmax(0,564fr)_minmax(0,494fr)] gap-[3px]">
        <div className="grid min-h-0 grid-rows-[minmax(0,664fr)_minmax(0,631fr)] gap-[3px]">
          <ScenePanel />
          <GamePanel />
        </div>
        <HierarchyPanel />
        <ProjectPanel />
        <InspectorPanel />
      </main>
      <StatusBar />

      <PopupMenu items={contextMenu} className="top-[312px] left-[1320px] w-[407px]" />
      <PopupMenu items={uiMenu} className="top-[439px] left-[1721px] w-[336px]" />
      <UsbWidget />
      <div className="absolute top-[77px] right-0.5 h-[72px] w-2 rounded-full border border-[#555] bg-[#666] pt-3.5">
        <div className="h-full rounded-full bg-gradient-to-b from-[#ffa35c] to-[#ff4040]" />
      </div>
    </div>
  )
}
